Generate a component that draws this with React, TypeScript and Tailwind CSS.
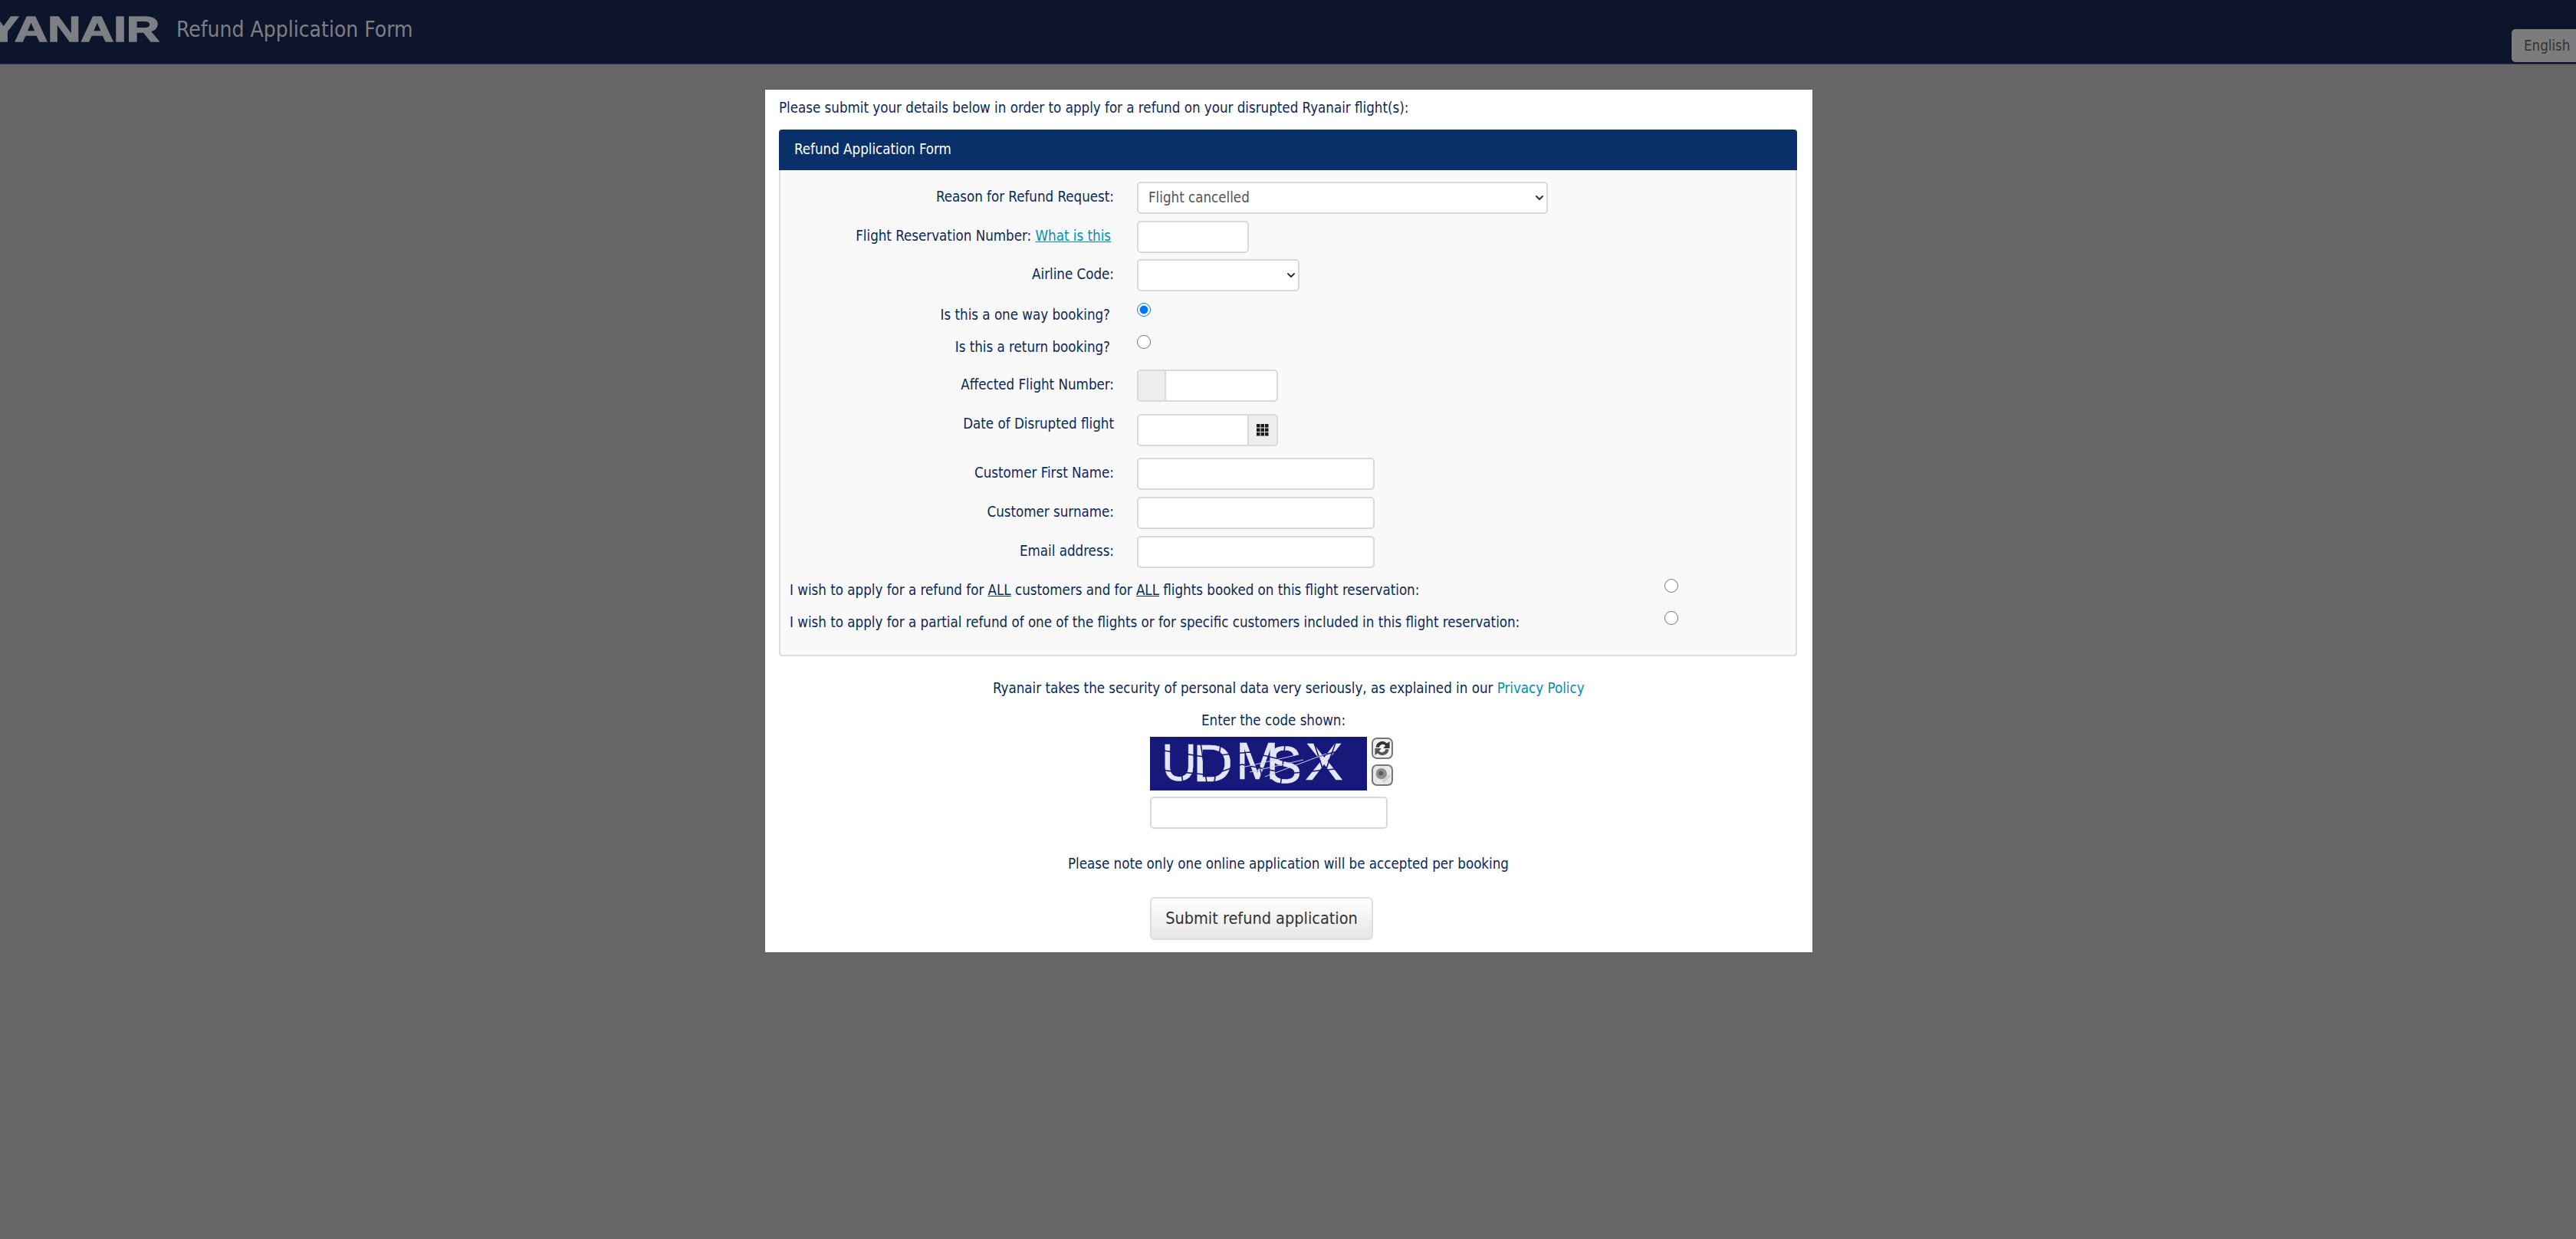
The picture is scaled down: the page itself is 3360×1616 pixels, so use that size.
import React from 'react';
import { ChevronDown } from 'lucide-react';

const labelCls = 'relative top-[-1px] w-[435px] text-right leading-[24px] text-[#0b2a5b]';
const inputCls = 'h-[42px] rounded-[5px] border-2 border-[#d9d9d9] bg-white px-3 outline-none';

interface RowProps {
  label: React.ReactNode;
  className?: string;
  children: React.ReactNode;
}

const Row: React.FC<RowProps> = ({ label, className = '', children }) => {
  return (
    <div className={`flex h-[42px] items-center gap-[30px] ${className}`}>
      <div className={labelCls}>{label}</div>
      {children}
    </div>
  );
};

const Captcha: React.FC = () => {
  return (
    <svg width="283" height="70" viewBox="0 0 283 70" className="block bg-[#17197a]">
      <g fill="#e4e6f6" stroke="#e4e6f6" strokeWidth="0.5" fontFamily="'Liberation Sans', sans-serif" fontSize="68">
        <text x="15" y="57" textLength="46" lengthAdjust="spacingAndGlyphs">U</text>
        <text x="56" y="58" textLength="52" lengthAdjust="spacingAndGlyphs">D</text>
        <text x="112" y="55" textLength="56" lengthAdjust="spacingAndGlyphs">M</text>
        <text x="153" y="60" textLength="45" lengthAdjust="spacingAndGlyphs">S</text>
        <text x="202" y="56" textLength="50" lengthAdjust="spacingAndGlyphs">X</text>
      </g>
      <g stroke="#17197a" strokeWidth="1.6" fill="none">
        <path d="M18 18 L70 26 L130 20 L190 34 L262 14" />
        <path d="M20 44 L80 50 L120 36 L180 48 L262 40" />
        <path d="M34 6 L44 66 M66 8 L74 60 M92 12 L84 58 M136 10 L148 60 M176 10 L170 66 M214 8 L232 62 M242 8 L222 64" />
      </g>
      <g stroke="#c8cbea" strokeWidth="1" fill="none">
        <path d="M120 40 L190 24 M130 46 L200 30 M150 52 L230 22" />
      </g>
    </svg>
  );
};

const App: React.FC = () => {
  return (
    <div className="relative min-h-screen overflow-hidden bg-[#666666] font-['DejaVu_Sans_Condensed','DejaVu_Sans',sans-serif] text-[18.6px]">
      <header className="flex h-[84px] items-start overflow-hidden border-b border-[#33384a] bg-[#0d152c] pl-[230px]">
        <div className="absolute left-0 top-[11px] flex w-[208px] justify-end">
          <span className="origin-right scale-x-[1.27] whitespace-nowrap font-['Liberation_Sans',sans-serif] text-[47px] font-bold leading-[54px] text-[#7d7f84] [-webkit-text-stroke:1.5px_#7d7f84]">
            RYANAIR
          </span>
        </div>
        <span className="mt-[22px] text-[28px] leading-[34px] text-[#7d7f84]">Refund Application Form</span>
      </header>
      <button className="absolute right-0 top-[38px] flex h-[43px] w-[84px] items-center rounded-l-[5px] bg-[#7c7c7c] pl-4 text-[#333333]">
        English
      </button>

      <main className="ml-[998px] mt-[33px] h-[1125px] w-[1366px] bg-white pl-[18px] pr-[20px] text-[#0b2a5b]">
        <div className="flex h-[52px] items-center pb-[5px]">
          Please submit your details below in order to apply for a refund on your disrupted Ryanair flight(s):
        </div>
        <div className="flex h-[53px] items-center rounded-t-[4px] bg-[#0a3069] pb-[1px] pl-5 text-white">Refund Application Form</div>
        <div className="h-[634px] rounded-b-[4px] border-2 border-t-0 border-[#dddddd] bg-[#f9f9f9] pt-[15px]">
          <Row label="Reason for Refund Request:">
            <div className="relative w-[536px]">
              <select defaultValue="c" className={`${inputCls} w-full appearance-none pl-[13px] text-[#555555]`}>
                <option value="c">Flight cancelled</option>
              </select>
              <ChevronDown size={16} strokeWidth={3} className="pointer-events-none absolute right-[3px] top-[13px] text-[#333333]" />
            </div>
          </Row>
          <Row
            className="mt-[9px]"
            label={
              <span className="pr-1">
                Flight Reservation Number: <a className="text-[#0090b3] underline">What is this</a>
              </span>
            }
          >
            <input className={`${inputCls} w-[146px]`} />
          </Row>
          <Row label="Airline Code:" className="mt-[8px]">
            <div className="relative w-[212px]">
              <select className={`${inputCls} w-full appearance-none`}>
                <option></option>
              </select>
              <ChevronDown size={16} strokeWidth={3} className="pointer-events-none absolute right-[3px] top-[13px] text-[#333333]" />
            </div>
          </Row>
          <Row label={<span className="relative top-[1px] pr-[5px]">Is this a one way booking?</span>} className="mt-[10px]">
            <input type="radio" name="way" defaultChecked className="relative top-[-7px] h-[18px] w-[18px]" />
          </Row>
          <Row label={<span className="relative top-[1px] pr-[5px]">Is this a return booking?</span>}>
            <input type="radio" name="way" className="relative top-[-7px] h-[18px] w-[18px]" />
          </Row>
          <Row label="Affected Flight Number:" className="mt-[8px]">
            <div className="flex h-[42px] w-[184px] overflow-hidden rounded-[5px] border-2 border-[#d9d9d9] bg-white">
              <span className="w-[36px] border-r-2 border-[#d9d9d9] bg-[#eeeeee]"></span>
            </div>
          </Row>
          <Row label={<span className="relative top-[-7px]">Date of Disrupted flight</span>} className="mt-[16px]">
            <div className="flex h-[42px] w-[184px] justify-end overflow-hidden rounded-[5px] border-2 border-[#d9d9d9] bg-white">
              <span className="flex w-[38px] items-center justify-center border-l-2 border-[#d9d9d9] bg-[#eeeeee]">
                <svg width="16" height="16" viewBox="0 0 16 16" fill="#1a1a1a">
                  {[0, 5.5, 11].map(y =>
                    [0, 5.5, 11].map(x => <rect key={`${x}-${y}`} x={x} y={y} width="4.5" height="4.5" />)
                  )}
                </svg>
              </span>
            </div>
          </Row>
          <Row label="Customer First Name:" className="mt-[15px]">
            <input className={`${inputCls} w-[310px]`} />
          </Row>
          <Row label="Customer surname:" className="mt-[9px]">
            <input className={`${inputCls} w-[310px]`} />
          </Row>
          <Row label="Email address:" className="mt-[9px]">
            <input className={`${inputCls} w-[310px]`} />
          </Row>
          <div className="mt-[9px] flex h-[42px] items-center pl-[12px]">
            <span className="relative top-[-1px] w-[1141px]">
              I wish to apply for a refund for <u>ALL</u> customers and for <u>ALL</u> flights booked on this flight reservation:
            </span>
            <input type="radio" name="scope" className="relative top-[-7px] m-0 h-[18px] w-[18px]" />
          </div>
          <div className="flex h-[42px] items-center pl-[12px]">
            <span className="relative top-[-1px] w-[1141px]">
              I wish to apply for a partial refund of one of the flights or for specific customers included in this flight reservation:
            </span>
            <input type="radio" name="scope" className="relative top-[-7px] m-0 h-[18px] w-[18px]" />
          </div>
        </div>

        <p className="mt-[30px] pl-[279px] leading-[24px]">
          Ryanair takes the security of personal data very seriously, as explained in our <a className="text-[#0090b3]">Privacy Policy</a>
        </p>
        <p className="mt-[18px] pl-[551px] leading-[24px]">Enter the code shown:</p>
        <div className="ml-[484px] mt-[9px] w-[330px]">
          <div className="flex gap-[6px]">
            <Captcha />
            <div className="flex flex-col gap-[7px] pt-px">
              <span className="flex h-[28px] w-[28px] items-center justify-center rounded-[7px] border-2 border-[#777777] bg-[#f1f1f1]">
                <svg width="24" height="24" viewBox="0 0 20 20" fill="#333333">
                  <path d="M3 9 A7 7 0 0 1 15 4.5 L18 2.5 L18 10 L11 10 L13.5 7 A4 4 0 0 0 6.5 9 Z" />
                  <path d="M17 11 A7 7 0 0 1 5 15.5 L2 17.5 L2 10 L9 10 L6.5 13 A4 4 0 0 0 13.5 11 Z" fill="#555555" />
                </svg>
              </span>
              <span className="flex h-[28px] w-[28px] items-center justify-center rounded-[7px] border-2 border-[#777777] bg-[#e8e8e8]">
                <svg width="24" height="24" viewBox="0 0 20 20">
                  <circle cx="9" cy="8.5" r="6" fill="#8f8f8f" />
                  <circle cx="8.5" cy="8" r="2.5" fill="#5c5c5c" />
                  <path d="M11 17 L18 10" stroke="#cfcfcf" strokeWidth="3" />
                </svg>
              </span>
            </div>
          </div>
          <input className={`${inputCls} mt-[8px] block w-[310px]`} />
        </div>
        <p className="mt-[34px] pl-[377px] leading-[24px]">Please note only one online application will be accepted per booking</p>
        <button className="ml-[484px] mt-[31px] h-[56px] w-[291px] rounded-[6px] border-2 border-[#dddddd] bg-gradient-to-b from-white to-[#e6e6e6] text-[21.5px] text-[#333333]">
          Submit refund application
        </button>
      </main>
    </div>
  );
};

export default App;
